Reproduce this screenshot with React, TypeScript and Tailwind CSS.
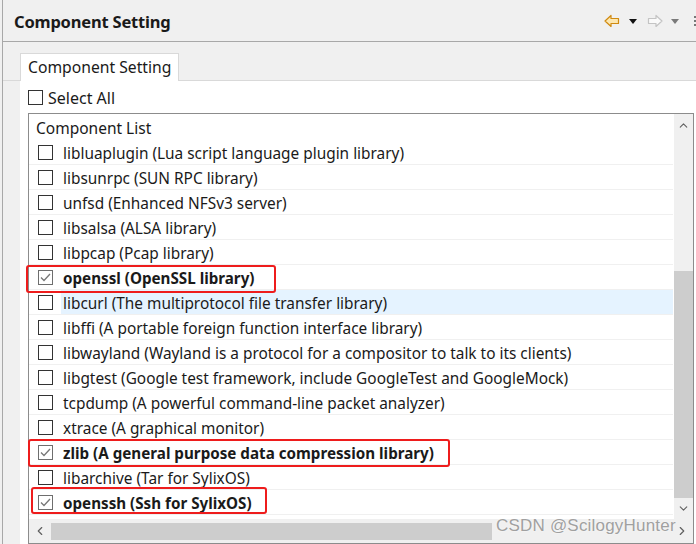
import { ChevronUp, ChevronDown, ChevronLeft, ChevronRight } from 'lucide-react'

const rows = [
  { name: 'libluaplugin (Lua script language plugin library)' },
  { name: 'libsunrpc (SUN RPC library)' },
  { name: 'unfsd (Enhanced NFSv3 server)' },
  { name: 'libsalsa (ALSA library)' },
  { name: 'libpcap (Pcap library)' },
  { name: 'openssl (OpenSSL library)', checked: true },
  { name: 'libcurl (The multiprotocol file transfer library)', hover: true },
  { name: 'libffi (A portable foreign function interface library)' },
  { name: 'libwayland (Wayland is a protocol for a compositor to talk to its clients)' },
  { name: 'libgtest (Google test framework, include GoogleTest and GoogleMock)' },
  { name: 'tcpdump (A powerful command-line packet analyzer)' },
  { name: 'xtrace (A graphical monitor)' },
  { name: 'zlib (A general purpose data compression library)', checked: true },
  { name: 'libarchive (Tar for SylixOS)' },
  { name: 'openssh (Ssh for SylixOS)', checked: true },
]

function CheckBox({ checked }: { checked?: boolean }) {
  return (
    <div
      className={
        'w-[15px] h-[15px] shrink-0 border bg-white flex items-center justify-center ' +
        (checked ? 'border-[#6e6e6e]' : 'border-[#333333]')
      }
    >
      {checked && (
        <svg width="11" height="9" viewBox="0 0 11 9">
          <path d="M1 4.5 L4 7.5 L10 1" fill="none" stroke="#777" strokeWidth="1.3" />
        </svg>
      )}
    </div>
  )
}

function NavArrows() {
  return (
    <div className="flex items-center mt-[1px]">
      <svg width="16" height="14" viewBox="0 0 16 14">
        <path
          d="M1 7 L7 1.5 V4.5 H14.5 V9.5 H7 V12.5 Z"
          fill="#fde7b0"
          stroke="#d08a10"
          strokeWidth="1.2"
          strokeLinejoin="round"
        />
      </svg>
      <svg width="8" height="5" viewBox="0 0 8 5" className="ml-[9px]">
        <path d="M0 0 H8 L4 5 Z" fill="#111" />
      </svg>
      <svg width="16" height="14" viewBox="0 0 16 14" className="ml-[10px]">
        <path
          d="M15 7 L9 1.5 V4.5 H1.5 V9.5 H9 V12.5 Z"
          fill="#fafafa"
          stroke="#c4c4c4"
          strokeWidth="1.2"
          strokeLinejoin="round"
        />
      </svg>
      <svg width="8" height="5" viewBox="0 0 8 5" className="ml-[8px]">
        <path d="M0 0 H8 L4 5 Z" fill="#7a7a7a" />
      </svg>
      <div className="flex flex-col gap-[2px] ml-[15px]">
        <div className="w-[2px] h-[2px] bg-[#777]" />
        <div className="w-[2px] h-[2px] bg-[#777]" />
        <div className="w-[2px] h-[2px] bg-[#777]" />
      </div>
    </div>
  )
}

export default function App() {
  return (
    <div
      className="relative w-[696px] h-[544px] overflow-hidden bg-[#f0f0f0] text-[#1a1a1a]"
      style={{ fontFamily: '"Noto Sans", "Open Sans", sans-serif' }}
    >
      <div className="ml-[2px] h-full border-l border-[#a8a8a8] flex flex-col">
        {/* header */}
        <div className="h-[42px] shrink-0 flex items-center justify-between pl-[11px] border-b border-[#a8a8a8]">
          <h1 className="text-[16.5px] font-bold tracking-[-0.2px] mt-[3px]">Component Setting</h1>
          <NavArrows />
        </div>

        {/* tab strip */}
        <div className="h-[39px] shrink-0 flex items-end">
          <div className="w-[17px] h-full border-b border-[#d9d9d9]" />
          <div className="w-[159px] h-[28px] bg-white border border-b-0 border-[#d9d9d9] flex items-center pl-[7px] pt-[1px] text-[15.7px]">
            Component Setting
          </div>
          <div className="flex-1 h-full border-b border-[#d9d9d9]" />
        </div>

        {/* tab body */}
        <div className="flex-1 ml-[17px] bg-white pl-[8px] flex flex-col">
          <div className="h-[32px] shrink-0 flex items-center gap-[5px]">
            <CheckBox />
            <span className="text-[16px] mt-[2px]">Select All</span>
          </div>

          <div className="flex-1 mr-[2px] border border-[#8c8c8c] flex flex-col">
            <div className="flex flex-1">
              <div className="flex-1 flex flex-col">
                <div className="h-[26px] flex items-center pl-[7px] pt-[3px] text-[15.5px]">Component List</div>
                {rows.map((r) => (
                  <div
                    key={r.name}
                    className="h-[25px] flex items-center pl-[9px] border-b border-[#f0f0f0] mr-[1px]"
                  >
                    <CheckBox checked={r.checked} />
                    <div
                      className={
                        'flex-1 h-full flex items-center pl-[2px] pt-[3px] ml-[8px] whitespace-nowrap ' +
                        (r.hover ? 'bg-[#e5f3ff] ' : '') +
                        (r.checked ? 'font-bold text-[15.2px]' : 'text-[15.4px]')
                      }
                    >
                      {r.name}
                    </div>
                  </div>
                ))}
              </div>
              {/* vertical scrollbar */}
              <div className="w-[19px] bg-[#f0f0f0] flex flex-col">
                <div className="h-[22px] flex items-center justify-center">
                  <ChevronUp size={13} strokeWidth={2} color="#606060" />
                </div>
                <div className="h-[135px]" />
                <div className="h-[227px] bg-[#cdcdcd]" />
                <div className="flex-1 flex items-center justify-center">
                  <ChevronDown size={13} strokeWidth={2} color="#606060" />
                </div>
              </div>
            </div>
            {/* horizontal scrollbar */}
            <div className="h-[24px] bg-[#f0f0f0] flex items-center">
              <div className="w-[22px] flex justify-center">
                <ChevronLeft size={14} strokeWidth={2} color="#606060" />
              </div>
              <div className="w-[441px] h-[17px] bg-[#cdcdcd]" />
              <div className="flex-1" />
              <div className="w-[22px] flex justify-center">
                <ChevronRight size={14} strokeWidth={2} color="#606060" />
              </div>
            </div>
          </div>
        </div>
      </div>

      {/* annotation boxes */}
      <div className="absolute left-[26px] top-[265px] w-[250px] h-[28px] border-[2px] border-[#ee1c1c] rounded-[3px]" />
      <div className="absolute left-[28px] top-[439px] w-[422px] h-[28px] border-[2px] border-[#ee1c1c] rounded-[3px]" />
      <div className="absolute left-[31px] top-[487px] w-[236px] h-[27px] border-[2px] border-[#ee1c1c] rounded-[3px]" />

      {/* watermark */}
      <div
        className="absolute left-[496px] top-[513px] text-[17px] text-[#a0a0a0] tracking-[0.2px]"
        style={{ fontFamily: '"Liberation Sans", sans-serif', textShadow: '0 0 2px #fff' }}
      >
        CSDN @ScilogyHunter
      </div>
    </div>
  )
}
